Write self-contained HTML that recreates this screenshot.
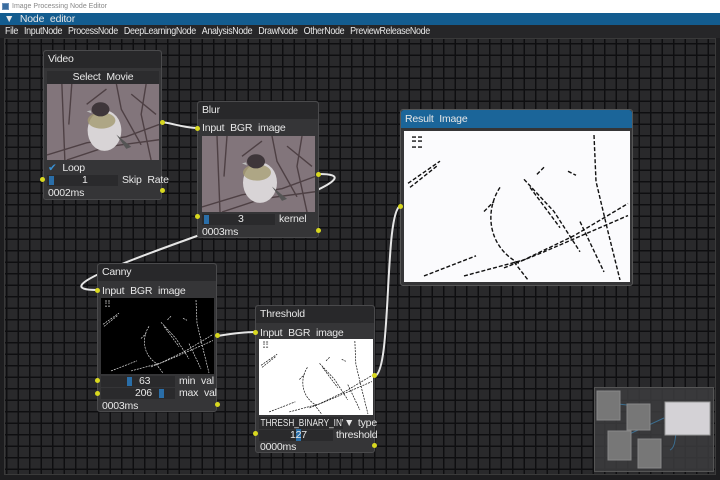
<!DOCTYPE html>
<html><head><meta charset="utf-8"><style>
*{margin:0;padding:0;box-sizing:border-box}
body{width:720px;height:480px;overflow:hidden;background:#1d1d1f;font-family:"Liberation Sans","DejaVu Sans",sans-serif;font-size:10.5px;letter-spacing:-0.2px;word-spacing:3px;color:#e8e8e8;position:relative}
.abs{position:absolute}
#tb{left:0;top:0;width:720px;height:13px;background:#fff;color:#888;font-size:7px;line-height:13px;padding-left:12px;word-spacing:0;letter-spacing:0}
#tbi{left:2px;top:3px;width:7px;height:7px;background:#3a6da0;border:1px solid #6a8fb8}
#hd{left:0;top:13px;width:720px;height:12px;background:#135c8f;line-height:12px;padding-left:4px}
#mbg{left:0;top:25px;width:720px;height:13px;background:#262628}
#mb{left:5px;top:25px;width:800px;height:13px;line-height:13px;word-spacing:0;letter-spacing:-0.4px;transform:scaleX(.85);transform-origin:0 0;white-space:nowrap}
#mb span{margin-right:7px}
#cv{left:4px;top:38px;width:712px;height:437px;border:1px solid #3a3a3a;
background-color:#29292b;
background-image:linear-gradient(#0e0e10 1.5px,transparent 1.5px),linear-gradient(90deg,#0e0e10 1.5px,transparent 1.5px);
background-size:11.5px 11.5px;background-position:1px 4px}
.node{position:absolute;background:#353537;border:1px solid #4a4a4c;border-radius:3px}
.tt{height:17px;background:#28282a;line-height:17px;padding-left:4px;border-radius:3px 3px 0 0}
.row{position:absolute;left:4px;line-height:12px;white-space:nowrap}
.pin{position:absolute;width:5px;height:5px;border-radius:50%;background:#d8d820}
.sl{position:absolute;height:11px;background:#2a2a2c}
.grab{position:absolute;width:5px;height:9px;top:1px;background:#2a6ea8}
svg.img{position:absolute;display:block}
</style></head><body>
<div id="tb" class="abs">Image Processing Node Editor</div>
<div id="tbi" class="abs"></div>
<div id="hd" class="abs">▼ Node editor</div>
<div id="mbg" class="abs"></div>
<div id="mb" class="abs"><span>File</span><span>InputNode</span><span>ProcessNode</span><span>DeepLearningNode</span><span>AnalysisNode</span><span>DrawNode</span><span>OtherNode</span><span>PreviewReleaseNode</span></div>
<div id="cv" class="abs"></div>

<svg width="0" height="0" style="position:absolute">
<defs>
<symbol id="bird" viewBox="0 0 113 75" preserveAspectRatio="none">
<rect width="113" height="75" fill="#7a6c72"/>
<rect width="113" height="75" fill="#8a7e84" opacity=".5"/>
<g stroke="#4e4044" stroke-width="1.4" fill="none">
<path d="M0 70 L40 58 L80 52 L113 40"/><path d="M20 75 L60 62 L113 55"/>
<path d="M15 0 L18 75"/><path d="M25 0 L22 40"/><path d="M70 0 L75 25 L95 60"/>
<path d="M100 0 L95 30 L105 75"/><path d="M40 20 L60 5"/><path d="M85 10 L110 30"/>
</g>
<ellipse cx="58" cy="46" rx="17" ry="20" fill="#d8d4d6"/>
<ellipse cx="55" cy="36" rx="14" ry="8" fill="#a49a70" opacity=".8"/>
<ellipse cx="54" cy="25" rx="9" ry="7" fill="#3e363a"/>
<path d="M44 26 L40 27 L45 29Z" fill="#bbb"/>
<path d="M70 50 L85 62 L80 64Z" fill="#555"/>
</symbol>
<symbol id="edge" viewBox="0 0 113 75" preserveAspectRatio="none">
<g stroke="currentColor" stroke-width=".7" fill="none" stroke-dasharray="2 1">
<path d="M4 3h5M4 5h5M4 8h6"/>
<path d="M2 26 L18 15"/><path d="M3 28 L17 17"/>
<path d="M48 28 C40 40 42 58 58 66"/>
<path d="M60 24 L75 40 L88 60"/><path d="M63 28 L78 48"/><path d="M70 18 L66 22"/>
<path d="M30 72 L60 64 L85 52 L112 36"/><path d="M50 68 L70 60 L112 42"/>
<path d="M95 2 L96 25 L102 50 L108 74"/><path d="M88 45 L100 70"/>
<path d="M10 72 L36 62"/><path d="M55 65 L62 74"/><path d="M82 20 L86 22"/><path d="M40 40 L45 35"/>
</g>
</symbol>
</defs>
</svg>

<svg class="abs" style="left:0;top:0" width="720" height="480">
<g stroke="#e6e6e6" stroke-width="2" fill="none">
<path d="M162 122 C175 124 185 128 198 128"/>
<path d="M319 174 C420 174 -4 290 97 290"/>
<path d="M217 336 C230 334 242 332 255 332"/>
<path d="M375 376 C392 370 384 215 400 206"/>
</g>
</svg>

<!-- Video -->
<div class="node" style="left:43px;top:50px;width:119px;height:150px">
<div class="tt">Video</div>
<div class="abs" style="left:3px;top:20px;width:112px;height:13px;background:#2c2c2e;text-align:center;line-height:13px">Select Movie</div>
<svg class="img" style="left:3px;top:33px" width="112" height="76"><use href="#bird"/></svg>
<div class="row" style="top:111px"><span style="color:#3a8fd0">✔</span> Loop</div>
<div class="sl" style="left:3px;top:124px;width:71px"><div class="grab" style="left:2px"></div><span class="abs" style="left:35px;line-height:11px">1</span></div>
<div class="row" style="left:78px;top:123px">Skip Rate</div>
<div class="row" style="top:136px">0002ms</div>
</div>
<div class="pin" style="left:160px;top:120px"></div>
<div class="pin" style="left:40px;top:177px"></div>
<div class="pin" style="left:160px;top:188px"></div>

<!-- Blur -->
<div class="node" style="left:197px;top:101px;width:122px;height:137px">
<div class="tt">Blur</div>
<div class="row" style="top:20px">Input BGR image</div>
<svg class="img" style="left:4px;top:34px" width="113" height="76"><use href="#bird"/></svg>
<div class="sl" style="left:4px;top:112px;width:73px"><div class="grab" style="left:2px"></div><span class="abs" style="left:36px;line-height:11px">3</span></div>
<div class="row" style="left:81px;top:111px">kernel</div>
<div class="row" style="top:124px">0003ms</div>
</div>
<div class="pin" style="left:195px;top:126px"></div>
<div class="pin" style="left:316px;top:172px"></div>
<div class="pin" style="left:195px;top:214px"></div>
<div class="pin" style="left:316px;top:228px"></div>

<!-- Canny -->
<div class="node" style="left:97px;top:263px;width:120px;height:149px">
<div class="tt">Canny</div>
<div class="row" style="top:21px">Input BGR image</div>
<svg class="img" style="left:3px;top:34px;color:#ddd" width="113" height="76"><rect width="113" height="76" fill="#000"/><use href="#edge"/></svg>
<div class="sl" style="left:3px;top:112px;width:74px"><div class="grab" style="left:26px"></div><span class="abs" style="left:38px;line-height:11px">63</span></div>
<div class="row" style="left:81px;top:111px">min val</div>
<div class="sl" style="left:3px;top:124px;width:74px"><div class="grab" style="left:58px"></div><span class="abs" style="left:34px;line-height:11px">206</span></div>
<div class="row" style="left:81px;top:123px">max val</div>
<div class="row" style="top:136px">0003ms</div>
</div>
<div class="pin" style="left:95px;top:288px"></div>
<div class="pin" style="left:215px;top:333px"></div>
<div class="pin" style="left:95px;top:378px"></div>
<div class="pin" style="left:95px;top:391px"></div>
<div class="pin" style="left:215px;top:402px"></div>

<!-- Threshold -->
<div class="node" style="left:255px;top:305px;width:120px;height:148px">
<div class="tt">Threshold</div>
<div class="row" style="top:21px">Input BGR image</div>
<svg class="img" style="left:3px;top:33px;color:#111" width="114" height="76"><rect width="114" height="76" fill="#fff"/><use href="#edge"/></svg>
<div class="abs" style="left:3px;top:111px;width:84px;height:12px;background:#2a2a2c;line-height:12px;white-space:nowrap;overflow:hidden"><span style="display:inline-block;transform:scaleX(.78);transform-origin:0 0;letter-spacing:0;padding-left:2px">THRESH_BINARY_INV</span></div>
<div class="row" style="left:88px;top:111px;word-spacing:1px">▼ type</div>
<div class="sl" style="left:3px;top:124px;width:74px"><span class="abs" style="left:31px;line-height:11px">1<span style="background:#2a6ea8">2</span>7</span></div>
<div class="row" style="left:80px;top:123px">threshold</div>
<div class="row" style="top:135px">0000ms</div>
</div>
<div class="pin" style="left:253px;top:330px"></div>
<div class="pin" style="left:372px;top:373px"></div>
<div class="pin" style="left:253px;top:431px"></div>
<div class="pin" style="left:372px;top:443px"></div>

<!-- Result -->
<div class="node" style="left:400px;top:109px;width:233px;height:177px;border-color:#555">
<div class="tt" style="background:#1b6599;height:18px;line-height:18px">Result Image</div>
<svg class="img" style="left:3px;top:21px;color:#111" width="226" height="151"><rect width="226" height="151" fill="#fbfbfd"/><use href="#edge"/></svg>
</div>
<div class="pin" style="left:398px;top:204px"></div>

<!-- minimap -->
<div class="abs" style="left:594px;top:387px;width:120px;height:85px;background:rgba(60,60,62,.85);border:1px solid #555">
<svg width="120" height="85" style="position:absolute;left:-1px;top:-1px">
<g stroke="#3b6d8f" stroke-width="1" fill="none">
<path d="M24 17 L33 18"/><path d="M29 50 L70 31"/><path d="M45 62 L58 60"/><path d="M76 63 C84 60 80 36 86 32"/>
</g>
<rect x="3" y="4" width="23" height="29" fill="#777" stroke="#888"/>
<rect x="33" y="17" width="23" height="26" fill="#777" stroke="#888"/>
<rect x="14" y="44" width="23" height="29" fill="#777" stroke="#888"/>
<rect x="44" y="52" width="23" height="29" fill="#777" stroke="#888"/>
<rect x="71" y="15" width="45" height="33" fill="#d4d2d6" stroke="#999"/>
</svg>
</div>
</body></html>
